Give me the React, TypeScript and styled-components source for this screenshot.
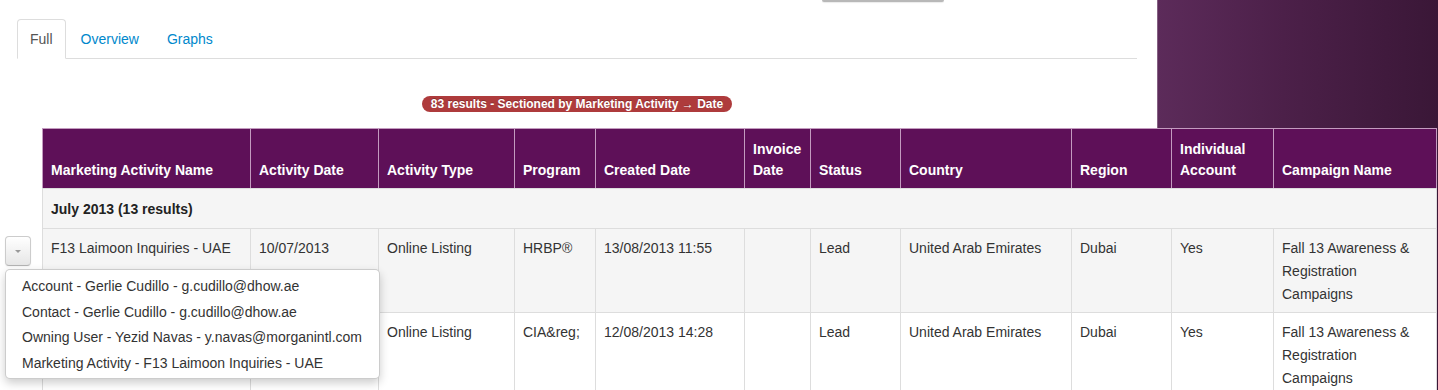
import * as React from 'react';
import styled, { createGlobalStyle } from 'styled-components';

const GlobalStyle = createGlobalStyle`
  html, body {
    margin: 0;
    padding: 0;
    background: #fff;
  }
  body {
    font-family: "Liberation Sans", Helvetica, Arial, sans-serif;
    font-size: 14px;
    color: #333;
  }
`;

const Page = styled.div`
  position: relative;
  width: 1438px;
  height: 390px;
  overflow: hidden;
`;

// decorative brand block behind the top-right corner
const SidePanel = styled.div`
  position: absolute;
  top: 0;
  right: 0;
  width: 281px;
  height: 100%;
  background: linear-gradient(90deg, #5c2b5a 0%, #4c2049 45%, #3a1737 100%);
  box-shadow: inset 1px 0 0 rgba(255, 255, 255, 0.25);
`;

const TopStub = styled.div`
  width: 122px;
  height: 2px;
  margin-left: 822px;
  background: #b8b8b8;
  border-radius: 0 0 3px 3px;
  box-shadow: 0 1px 1px rgba(0, 0, 0, 0.08);
`;

const Header = styled.div`
  position: relative;
  width: 1120px;
  margin-left: 17px;
  padding-top: 17px;
`;

const Tabs = styled.ul`
  display: flex;
  list-style: none;
  margin: 0;
  padding: 0;
  border-bottom: 1px solid #ddd;
`;

const Tab = styled.li<{ $active?: boolean }>`
  margin-right: 2px;
  margin-bottom: -1px;
  padding: 9px 12px;
  line-height: 20px;
  border: 1px solid ${p => (p.$active ? '#ddd' : 'transparent')};
  border-bottom-color: ${p => (p.$active ? '#fff' : 'transparent')};
  border-radius: 4px 4px 0 0;
  background: ${p => (p.$active ? '#fff' : 'transparent')};
  color: ${p => (p.$active ? '#555' : '#0088cc')};
  cursor: pointer;
`;

const BadgeRow = styled.div`
  display: flex;
  justify-content: center;
  padding: 37px 0 16px;
`;

const Badge = styled.span`
  display: inline-block;
  padding: 1px 9px 1px;
  font-size: 12px;
  font-weight: bold;
  line-height: 14px;
  color: #fff;
  background: #ae3b3c;
  border-radius: 9px;
  text-shadow: 0 -1px 0 rgba(0, 0, 0, 0.25);
`;

const TableWrap = styled.div`
  position: relative;
  padding-left: 42px;
`;

const Table = styled.table`
  width: 1394px;
  table-layout: fixed;
  border-collapse: collapse;
  border-spacing: 0;
`;

const HeadCell = styled.th`
  padding: 10px 8px 7px;
  text-align: left;
  vertical-align: bottom;
  font-weight: bold;
  line-height: 21px;
  color: #fff;
  background: #5e1058;
  border: 1px solid #c39bbf;
  border-bottom-color: #ddd;
`;

const GroupCell = styled.td`
  padding: 9px 8px 7px;
  line-height: 23px;
  font-weight: bold;
  color: #222;
  background: #f5f5f5;
  border: 1px solid #ddd;
`;

const Row = styled.tr<{ $striped?: boolean }>`
  background: ${p => (p.$striped ? '#f5f5f5' : '#fff')};
`;

const Cell = styled.td`
  position: relative;
  padding: 8px 8px 6px;
  line-height: 23px;
  vertical-align: top;
  border: 1px solid #ddd;
`;

const ActionButton = styled.button`
  position: absolute;
  left: -38px;
  top: 7px;
  width: 26px;
  height: 30px;
  padding: 0;
  display: flex;
  align-items: center;
  justify-content: center;
  background: linear-gradient(#ffffff, #e6e6e6);
  border: 1px solid #ccc;
  border-bottom-color: #b3b3b3;
  border-radius: 4px;
  box-shadow: inset 0 1px 0 rgba(255, 255, 255, 0.2), 0 1px 2px rgba(0, 0, 0, 0.05);
`;

const Caret = styled.span`
  width: 0;
  height: 0;
  border-left: 3px solid transparent;
  border-right: 3px solid transparent;
  border-top: 3px solid #999;
`;

const Menu = styled.ul`
  position: absolute;
  left: -38px;
  top: 40px;
  z-index: 5;
  width: 375px;
  box-sizing: border-box;
  margin: 0;
  padding: 4px 0 2px;
  list-style: none;
  background: #fff;
  border: 1px solid rgba(0, 0, 0, 0.2);
  border-radius: 5px;
  box-shadow: 0 4px 10px rgba(0, 0, 0, 0.2);
`;

const MenuItem = styled.li`
  padding: 2px 16px;
  line-height: 21.5px;
  color: #333;
  white-space: nowrap;
`;

const columns = [
  { label: 'Marketing Activity Name', width: 208 },
  { label: 'Activity Date', width: 128 },
  { label: 'Activity Type', width: 136 },
  { label: 'Program', width: 81 },
  { label: 'Created Date', width: 149 },
  { label: 'Invoice Date', width: 66 },
  { label: 'Status', width: 90 },
  { label: 'Country', width: 171 },
  { label: 'Region', width: 100 },
  { label: 'Individual Account', width: 102 },
  { label: 'Campaign Name', width: 163 },
];

const rows = [
  ['F13 Laimoon Inquiries - UAE', '10/07/2013', 'Online Listing', 'HRBP®', '13/08/2013 11:55', '', 'Lead', 'United Arab Emirates', 'Dubai', 'Yes', 'Fall 13 Awareness & Registration Campaigns'],
  ['', '', 'Online Listing', 'CIA&reg;', '12/08/2013 14:28', '', 'Lead', 'United Arab Emirates', 'Dubai', 'Yes', 'Fall 13 Awareness & Registration Campaigns'],
];

const menuItems = [
  'Account - Gerlie Cudillo - g.cudillo@dhow.ae',
  'Contact - Gerlie Cudillo - g.cudillo@dhow.ae',
  'Owning User - Yezid Navas - y.navas@morganintl.com',
  'Marketing Activity - F13 Laimoon Inquiries - UAE',
];

export default function App() {
  return (
    <Page>
      <GlobalStyle />
      <SidePanel />
      <TopStub />
      <Header>
        <Tabs>
          <Tab $active>Full</Tab>
          <Tab>Overview</Tab>
          <Tab>Graphs</Tab>
        </Tabs>
        <BadgeRow>
          <Badge>83 results - Sectioned by Marketing Activity → Date</Badge>
        </BadgeRow>
      </Header>
      <TableWrap>
        <Table>
          <colgroup>
            {columns.map(c => (
              <col key={c.label} style={{ width: c.width }} />
            ))}
          </colgroup>
          <thead>
            <tr>
              {columns.map(c => (
                <HeadCell key={c.label}>{c.label}</HeadCell>
              ))}
            </tr>
          </thead>
          <tbody>
            <tr>
              <GroupCell colSpan={columns.length}>July 2013 (13 results)</GroupCell>
            </tr>
            {rows.map((r, i) => (
              <Row key={i} $striped={i % 2 === 0}>
                {r.map((v, j) => (
                  <Cell key={j}>
                    {i === 0 && j === 0 && (
                      <>
                        <ActionButton>
                          <Caret />
                        </ActionButton>
                        <Menu>
                          {menuItems.map(m => (
                            <MenuItem key={m}>{m}</MenuItem>
                          ))}
                        </Menu>
                      </>
                    )}
                    {v}
                  </Cell>
                ))}
              </Row>
            ))}
          </tbody>
        </Table>
      </TableWrap>
    </Page>
  );
}
